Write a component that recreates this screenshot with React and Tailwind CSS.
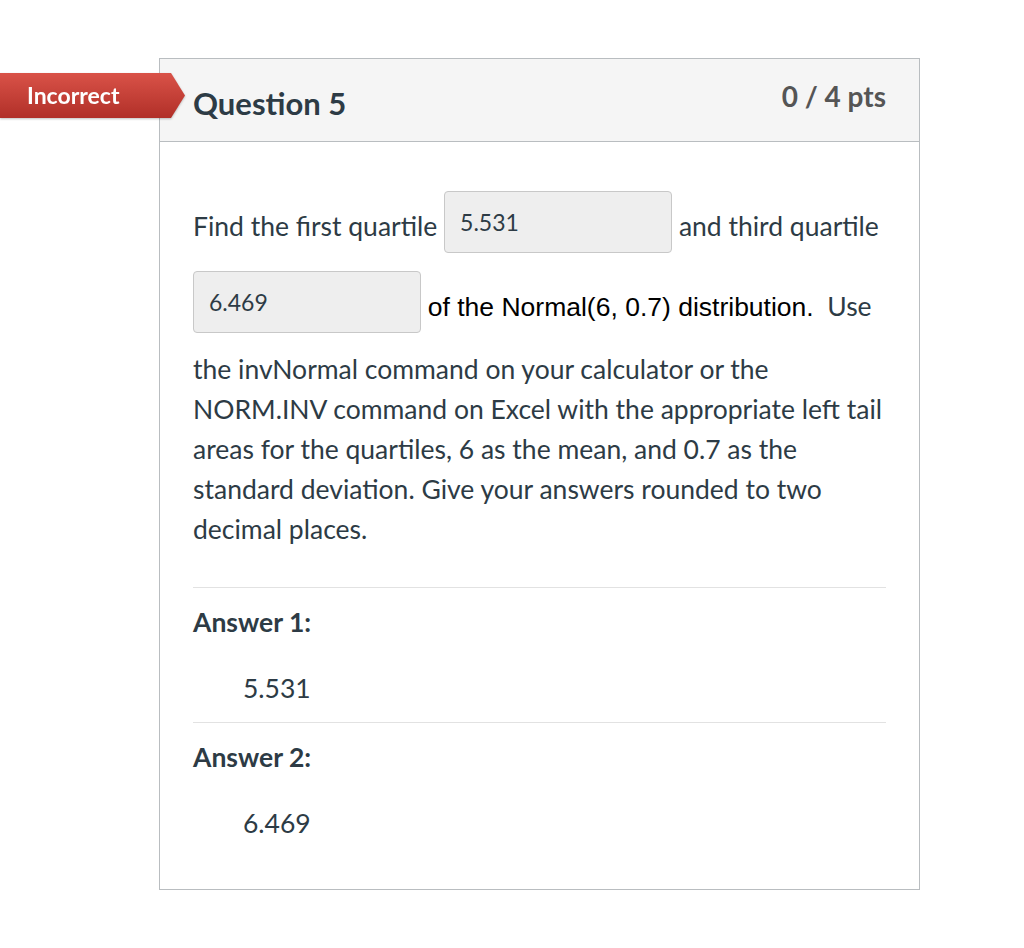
export default function App() {
  const answers = [
    { label: 'Answer 1:', value: '5.531' },
    { label: 'Answer 2:', value: '6.469' },
  ];

  const inputCls =
    'inline-block align-middle w-[228px] h-[62px] mt-[2px] mb-[16px] px-[15px] bg-[#eeeeee] border border-[#c8c8c8] rounded-[4px] text-[23px] leading-[60px] text-[#2d3b45]';

  return (
    <div className="relative min-h-[948px] w-[1024px] bg-white font-['Lato','Noto_Sans',sans-serif] text-[#2d3b45]">
      <div className="pt-[58px] pl-[159px]">
        <div className="w-[761px] border border-[#b9bdc0]">
          {/* header */}
          <div className="h-[83px] bg-[#f5f5f5] border-b border-[#b9bdc0] flex items-start justify-between px-[33px]">
            <h2 className="mt-[29px] text-[31px] font-bold leading-none text-[#2d3b45]">Question 5</h2>
            <div className="mt-[23px] text-[28px] font-bold leading-none text-[#555555]">0 / 4 pts</div>
          </div>

          {/* body */}
          <div className="px-[33px] pt-[47px]">
            <p className="text-[26.5px] leading-[40px]">
              Find the first quartile{' '}
              <span className={inputCls}>5.531</span>{' '}
              and third quartile{' '}
              <span className={inputCls}>6.469</span>{' '}
              <span className="font-['Liberation_Sans',Arial,sans-serif] text-[26.5px] text-black">of the Normal(6, 0.7) distribution.</span>
              &nbsp; Use the invNormal command on your calculator or the NORM.INV command on Excel with the appropriate left tail areas for the quartiles, 6 as the mean, and 0.7 as the standard deviation. Give your answers rounded to two decimal places.
            </p>

            <div className="mt-[38px]">
              {answers.map((a) => (
                <div key={a.label} className="border-t border-[#e2e2e2]">
                  <div className="pt-[20px] text-[26.5px] font-bold leading-[28px]">{a.label}</div>
                  <div className="pt-[38px] pb-[20px] pl-[50px] text-[26.5px] leading-[28px]">{a.value}</div>
                </div>
              ))}
            </div>
            <div className="h-[32px]"></div>
          </div>
        </div>
      </div>

      {/* result banner */}
      <div className="absolute left-0 top-[73px] h-[45px] flex items-stretch drop-shadow-[0_1px_1px_rgba(0,0,0,0.25)]">
        <div className="w-[171px] bg-gradient-to-b from-[#d95248] to-[#b12f28] flex items-center pl-[27px] text-white text-[23px] font-bold">
          Incorrect
        </div>
        <svg width="14" height="45" viewBox="0 0 14 45" className="block">
          <defs>
            <linearGradient id="rg" x1="0" y1="0" x2="0" y2="1">
              <stop offset="0" stopColor="#d95248" />
              <stop offset="1" stopColor="#b12f28" />
            </linearGradient>
          </defs>
          <path d="M0 0 L14 22.5 L0 45 Z" fill="url(#rg)" />
        </svg>
      </div>
    </div>
  );
}
